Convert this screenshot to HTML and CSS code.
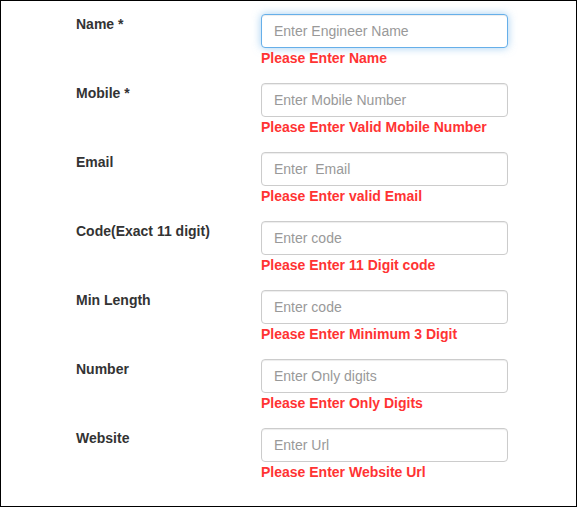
FILE: index.html
```html
<!DOCTYPE html>
<html>
<head>
<meta charset="utf-8">
<link rel="stylesheet" href="styles.css">
</head>
<body>
<div class="frame">
  <form class="form">
    <div class="row">
      <label class="label">Name *</label>
      <div class="field">
        <input class="input focused" type="text" placeholder="Enter Engineer Name">
        <span class="error">Please Enter Name</span>
      </div>
    </div>
    <div class="row">
      <label class="label">Mobile *</label>
      <div class="field">
        <input class="input" type="text" placeholder="Enter Mobile Number">
        <span class="error">Please Enter Valid Mobile Number</span>
      </div>
    </div>
    <div class="row">
      <label class="label">Email</label>
      <div class="field">
        <input class="input" type="text" placeholder="Enter  Email">
        <span class="error">Please Enter valid Email</span>
      </div>
    </div>
    <div class="row">
      <label class="label">Code(Exact 11 digit)</label>
      <div class="field">
        <input class="input" type="text" placeholder="Enter code">
        <span class="error">Please Enter 11 Digit code</span>
      </div>
    </div>
    <div class="row">
      <label class="label">Min Length</label>
      <div class="field">
        <input class="input" type="text" placeholder="Enter code">
        <span class="error">Please Enter Minimum 3 Digit</span>
      </div>
    </div>
    <div class="row">
      <label class="label">Number</label>
      <div class="field">
        <input class="input" type="text" placeholder="Enter Only digits">
        <span class="error">Please Enter Only Digits</span>
      </div>
    </div>
    <div class="row">
      <label class="label">Website</label>
      <div class="field">
        <input class="input" type="text" placeholder="Enter Url">
        <span class="error">Please Enter Website Url</span>
      </div>
    </div>
  </form>
</div>
</body>
</html>
```

FILE: styles.css
```css
html, body {
  margin: 0;
  padding: 0;
  background: #fff;
}
body {
  font-family: "Liberation Sans", Arial, sans-serif;
  font-size: 14px;
  line-height: 20px;
  color: #333;
}
.frame {
  box-sizing: border-box;
  width: 577px;
  height: 507px;
  border: 1px solid #000;
  padding: 13px 0 0 75px;
}
.form {
  display: flex;
  flex-direction: column;
  gap: 15px;
}
.row {
  display: grid;
  grid-template-columns: 185px 247px;
}
.label {
  font-weight: bold;
  color: #333;
}
.field {
  display: flex;
  flex-direction: column;
}
.input {
  box-sizing: border-box;
  width: 247px;
  height: 34px;
  margin: 0;
  padding: 6px 12px;
  font-family: "Liberation Sans", Arial, sans-serif;
  font-size: 14px;
  line-height: 20px;
  color: #555;
  background: #fff;
  border: 1px solid #ccc;
  border-radius: 4px;
  box-shadow: inset 0 1px 1px rgba(0,0,0,0.075);
  outline: none;
}
.input::placeholder {
  color: #999;
  opacity: 1;
}
.input.focused {
  border-color: #66afe9;
  box-shadow: inset 0 1px 1px rgba(0,0,0,0.075), 0 0 8px rgba(102,175,233,0.6);
}
.error {
  color: #ff3333;
  font-weight: bold;
}
```
